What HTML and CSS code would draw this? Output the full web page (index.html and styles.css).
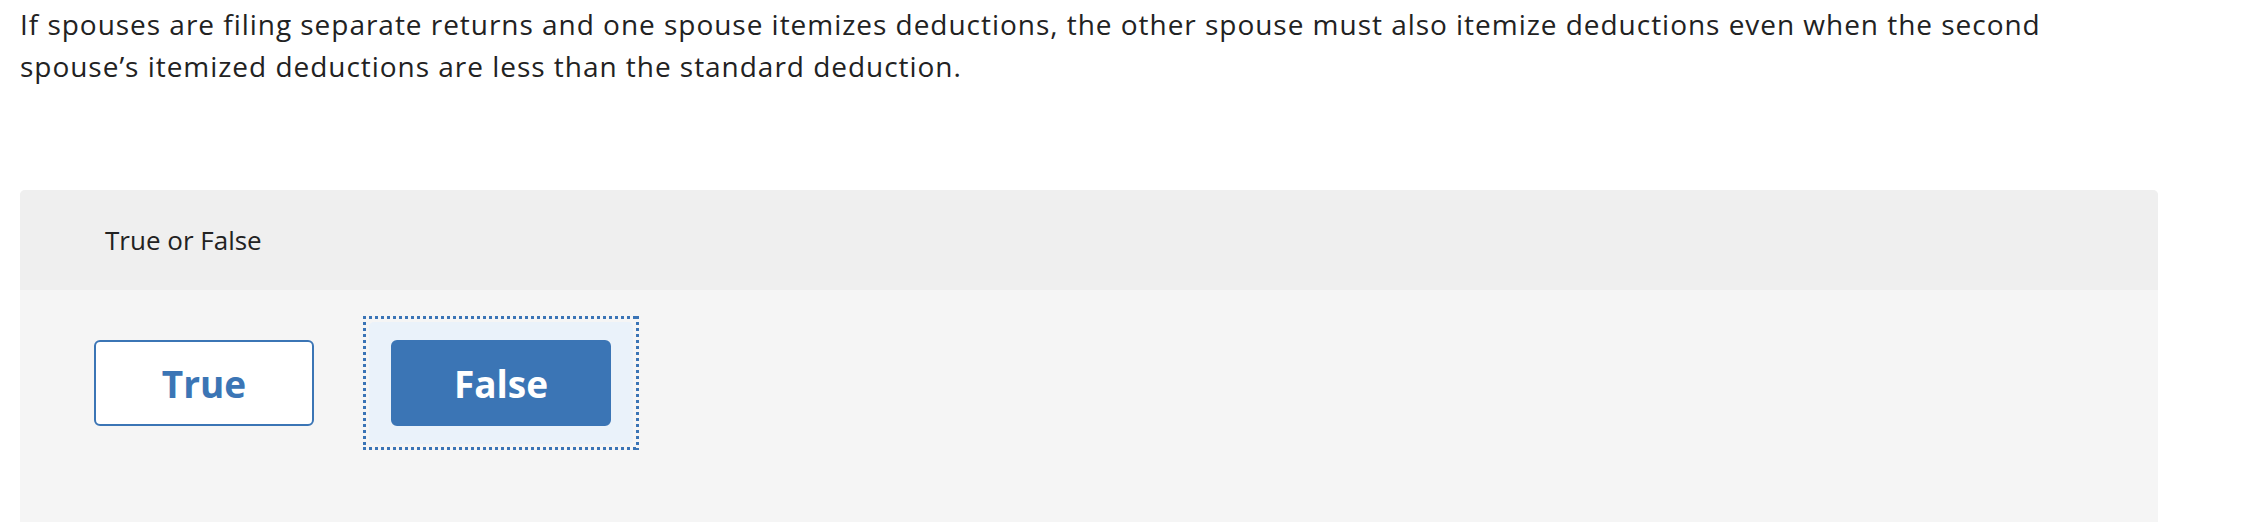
FILE: index.html
```html
<!DOCTYPE html>
<html lang="en">
<head>
<meta charset="utf-8">
<title>True or False</title>
<link rel="stylesheet" href="styles.css">
</head>
<body>
<main class="page">
  <p class="prompt">If spouses are filing separate returns and one spouse itemizes deductions, the other spouse must also itemize deductions even when the second spouse’s itemized deductions are less than the standard deduction.</p>
  <section class="question">
    <header class="question-head">True or False</header>
    <div class="question-body">
      <div class="choices">
        <div class="choice">
          <div class="choice-pad">
            <button class="choice-btn" type="button">True</button>
          </div>
        </div>
        <div class="choice choice-focused">
          <div class="choice-pad">
            <button class="choice-btn choice-btn-selected" type="button">False</button>
          </div>
        </div>
      </div>
    </div>
  </section>
</main>
</body>
</html>
```

FILE: styles.css
```css
html, body {
  margin: 0;
  padding: 0;
  background: #ffffff;
}

.page {
  width: 2138px;
  padding: 0 0 0 20px;
  font-family: "Open Sans", "Liberation Sans", sans-serif;
  color: #222222;
}

.prompt {
  max-width: 2100px;
  margin: 0;
  padding-top: 3px;
  font-size: 28px;
  line-height: 42px;
  letter-spacing: 0.97px;
}

.question {
  margin-top: 103px;
  border-radius: 5px 5px 0 0;
  overflow: hidden;
  background: #f5f5f5;
}

.question-head {
  height: 100px;
  display: flex;
  align-items: center;
  padding-left: 85px;
  background: #efefef;
  font-size: 26px;
}

.question-body {
  padding: 26px 0 80px 46px;
}

.choices {
  display: flex;
  gap: 21px;
}

.choice {
  padding: 6px;
}

.choice-pad {
  padding: 18px 22px;
  border-radius: 5px;
}

.choice-focused {
  background:
    repeating-linear-gradient(90deg, #3a74b6 0 3px, transparent 3px 6px) left top / 100% 3px no-repeat,
    repeating-linear-gradient(90deg, #3a74b6 0 3px, transparent 3px 6px) left bottom / 100% 3px no-repeat,
    repeating-linear-gradient(180deg, #3a74b6 0 3px, transparent 3px 6px) left top / 3px 100% no-repeat,
    repeating-linear-gradient(180deg, #3a74b6 0 3px, transparent 3px 6px) right top / 3px 100% no-repeat;
}

.choice-focused .choice-pad {
  background: #eaf2fa;
}

.choice-btn {
  width: 220px;
  height: 86px;
  box-sizing: border-box;
  border: 2px solid #3b75b5;
  border-radius: 6px;
  background: #ffffff;
  color: #3b75b5;
  font-family: "Open Sans", "Liberation Sans", sans-serif;
  font-weight: 700;
  font-size: 37px;
  padding: 0;
  display: block;
}

.choice-btn-selected {
  background: #3b75b5;
  color: #ffffff;
}
```
